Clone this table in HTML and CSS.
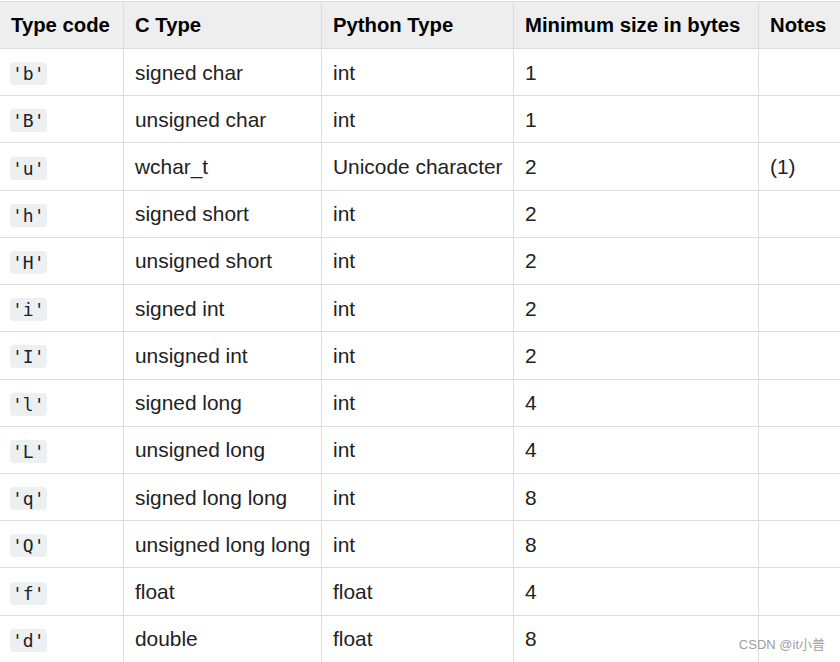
FILE: index.html
```html
<!DOCTYPE html>
<html>
<head>
<meta charset="utf-8">
<link rel="stylesheet" href="styles.css">
</head>
<body>
<div class="page">
<table class="types">
  <colgroup>
    <col class="c1"><col class="c2"><col class="c3"><col class="c4"><col class="c5">
  </colgroup>
  <thead>
    <tr><th>Type code</th><th>C Type</th><th>Python Type</th><th>Minimum size in bytes</th><th>Notes</th></tr>
  </thead>
  <tbody>
    <tr><td><code>'b'</code></td><td>signed char</td><td>int</td><td>1</td><td></td></tr>
    <tr><td><code>'B'</code></td><td>unsigned char</td><td>int</td><td>1</td><td></td></tr>
    <tr><td><code>'u'</code></td><td>wchar_t</td><td>Unicode character</td><td>2</td><td>(1)</td></tr>
    <tr><td><code>'h'</code></td><td>signed short</td><td>int</td><td>2</td><td></td></tr>
    <tr><td><code>'H'</code></td><td>unsigned short</td><td>int</td><td>2</td><td></td></tr>
    <tr><td><code>'i'</code></td><td>signed int</td><td>int</td><td>2</td><td></td></tr>
    <tr><td><code>'I'</code></td><td>unsigned int</td><td>int</td><td>2</td><td></td></tr>
    <tr><td><code>'l'</code></td><td>signed long</td><td>int</td><td>4</td><td></td></tr>
    <tr><td><code>'L'</code></td><td>unsigned long</td><td>int</td><td>4</td><td></td></tr>
    <tr><td><code>'q'</code></td><td>signed long long</td><td>int</td><td>8</td><td></td></tr>
    <tr><td><code>'Q'</code></td><td>unsigned long long</td><td>int</td><td>8</td><td></td></tr>
    <tr><td><code>'f'</code></td><td>float</td><td>float</td><td>4</td><td></td></tr>
    <tr><td><code>'d'</code></td><td>double</td><td>float</td><td>8</td><td></td></tr>
  </tbody>
</table>
<div class="watermark">CSDN @it小普</div>
</div>
</body>
</html>
```
FILE: styles.css
```css
html, body {
  margin: 0;
  padding: 0;
  background: #ffffff;
}
.page {
  position: relative;
  width: 840px;
  height: 662px;
  overflow: hidden;
}
.types {
  border-collapse: collapse;
  table-layout: fixed;
  margin: 1px 0 0 -1px;
  width: 841px;
  font-family: "Liberation Sans", Arial, sans-serif;
  color: #222222;
}
.c1 { width: 124px; }
.c2 { width: 198px; }
.c3 { width: 192px; }
.c4 { width: 245px; }
.c5 { width: 82px; }
.types th, .types td {
  border: 1px solid #dddddd;
  padding: 0 11px;
  text-align: left;
  vertical-align: middle;
  white-space: nowrap;
  overflow: hidden;
}
.types th {
  background: #eeeeee;
  color: #000000;
  font-weight: bold;
  font-size: 20.3px;
  height: 46px;
}
.types td {
  font-size: 20.9px;
  line-height: 24px;
  height: 45.23px;
  padding-top: 1px;
  padding-bottom: 0;
}
.types code {
  display: inline-block;
  font-family: "DejaVu Sans Mono", "Liberation Mono", monospace;
  font-size: 18px;
  line-height: 23px;
  padding: 0 2px;
  margin-left: -1px;
  vertical-align: middle;
  background: #edf0f3;
  border-radius: 4px;
  color: #222222;
}
.watermark {
  position: absolute;
  right: 15px;
  bottom: 9px;
  font-family: "Liberation Sans", Arial, "Noto Sans CJK SC", sans-serif;
  font-size: 13px;
  color: #a0a0a0;
  text-shadow: 0 0 2px #ffffff;
}
```
